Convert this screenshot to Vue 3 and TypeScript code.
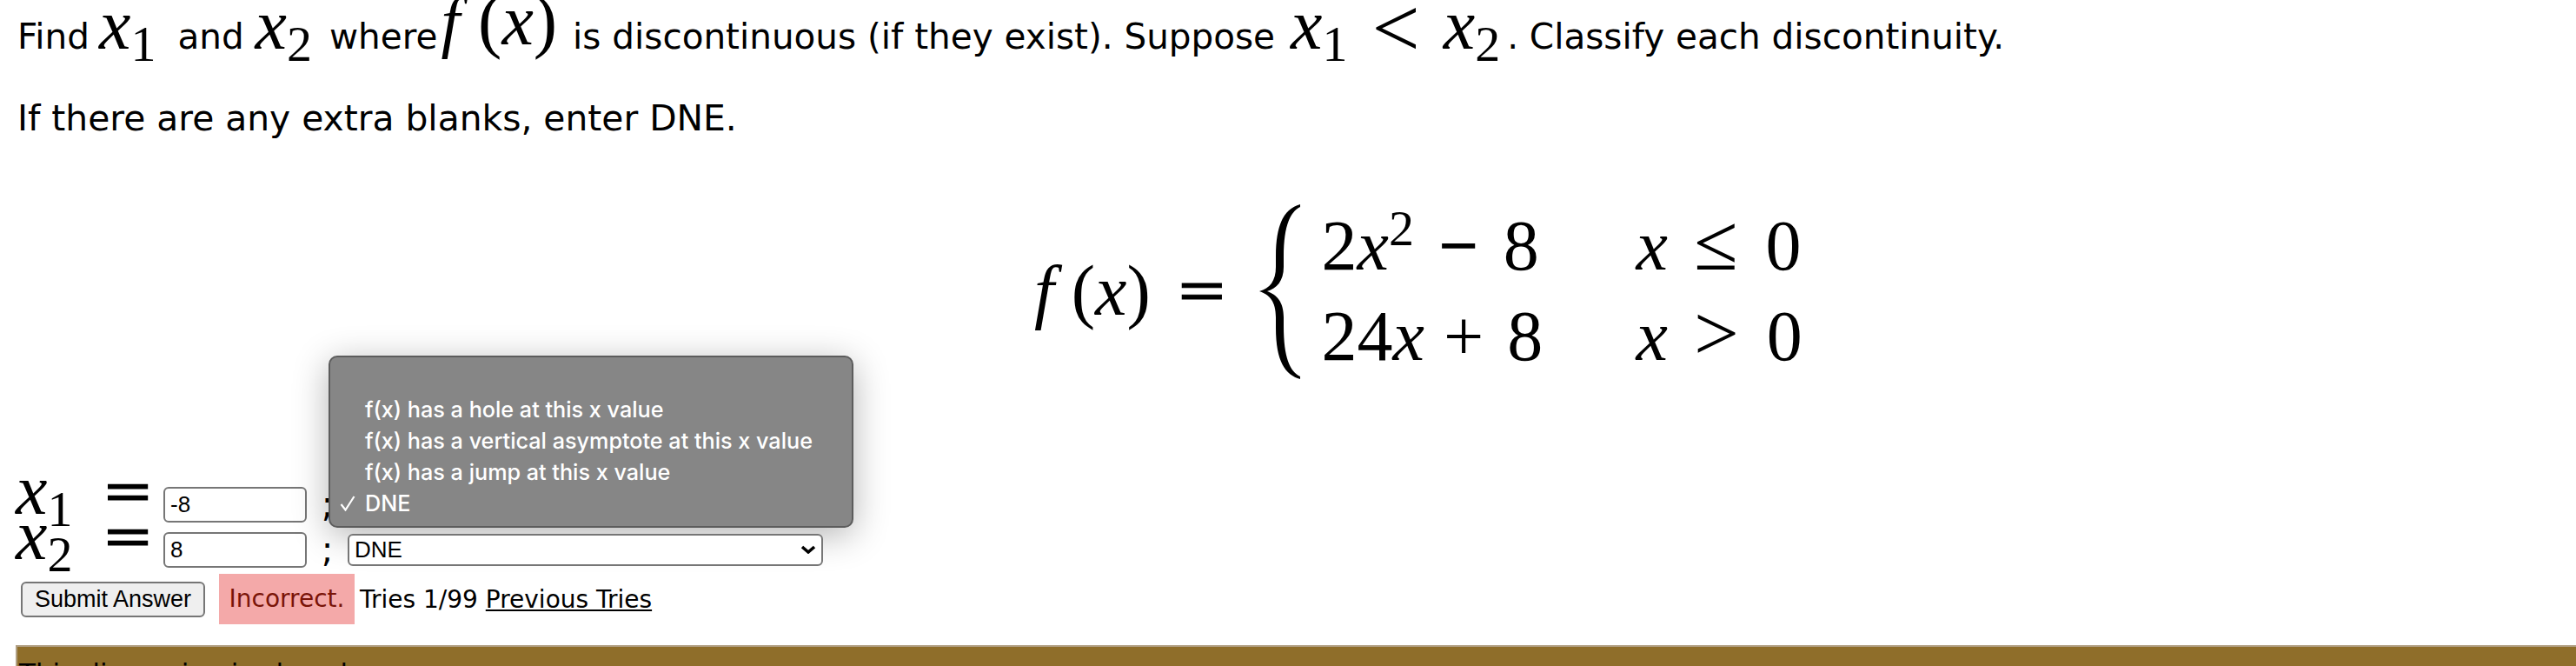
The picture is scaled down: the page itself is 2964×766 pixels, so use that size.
<script setup lang="ts">
const options: string[] = [
  'f(x) has a hole at this x value',
  'f(x) has a vertical asymptote at this x value',
  'f(x) has a jump at this x value',
  'DNE',
]
</script>

<template>
  <main class="page">
    <p class="line first">
      <span>Find</span>
      <span class="m a1"><i>x</i><sub>1</sub></span>
      <span class="t-and">and</span>
      <span class="m a2"><i>x</i><sub>2</sub></span>
      <span class="t-where">where</span>
      <span class="m a3"><i class="f">f</i>(<i>x</i>)</span>
      <span class="t-is">is discontinuous (if they exist). Suppose</span>
      <span class="m a4"><i>x</i><sub>1</sub></span>
      <span class="m lt">&lt;</span>
      <span class="m a5"><i>x</i><sub>2</sub></span>
      <span class="t-classify">. Classify each discontinuity.</span>
    </p>
    <p class="line second">If there are any extra blanks, enter DNE.</p>

    <div class="display">
      <span class="fx"><i class="f2">f</i>(<i>x</i>)</span>
      <span class="eq">=</span>
      <svg class="brace" viewBox="0 0 47 201" width="47" height="201">
        <path d="M47 0 C30 5 19 20 19 60 L19 72 C19 88 12 97 0 100 C12 104 19 112 19 130 L19 142 C19 181 30 196 47 201 L47 198 C35 192 28 176 28 140 L28 130 C28 112 20 104 9 100 C20 97 28 88 28 72 L28 60 C28 26 35 9 47 3 Z" fill="#000" />
      </svg>
      <div class="cases">
        <span class="c1">2<i>x</i><sup>2</sup><span class="op">−</span>8</span>
        <span class="c2"><i>x</i><span class="rel">≤</span>0</span>
        <span class="c1">24<i>x</i><span class="op plus">+</span>8</span>
        <span class="c2"><i>x</i><span class="rel">&gt;</span>0</span>
      </div>
    </div>

    <div class="answers">
      <div class="row">
        <span class="var"><i>x</i><sub>1</sub></span>
        <span class="equals">=</span>
        <input class="field" value="-8" />
        <span class="semi">;</span>
        <div class="picker-wrap">
          <select class="picker"><option>DNE</option></select>
          <svg class="chev" viewBox="0 0 18 10" width="18" height="10"><path d="M2 2 L9 8 L16 2" fill="none" stroke="#000" stroke-width="3.6" /></svg>
          <div class="menu">
            <div v-for="o in options" :key="o" class="item">
              <span class="check">
                <svg v-if="o === 'DNE'" viewBox="0 0 18 18" width="18" height="18"><path d="M1.5 10 L6.5 16.5 L16.5 1" fill="none" stroke="#fff" stroke-width="2.2" /></svg>
              </span>{{ o }}
            </div>
          </div>
        </div>
      </div>
      <div class="row">
        <span class="var"><i>x</i><sub>2</sub></span>
        <span class="equals">=</span>
        <input class="field" value="8" />
        <span class="semi">;</span>
        <div class="picker-wrap">
          <select class="picker"><option>DNE</option></select>
          <svg class="chev" viewBox="0 0 18 10" width="18" height="10"><path d="M2 2 L9 8 L16 2" fill="none" stroke="#000" stroke-width="3.6" /></svg>
        </div>
      </div>
    </div>

    <div class="submit-row">
      <button class="submit">Submit Answer</button>
      <span class="bad">Incorrect.</span>
      <span class="tries">Tries 1/99 <a class="prev">Previous Tries</a></span>
    </div>

    <div class="discussion">This discussion is closed.</div>
  </main>
</template>

<style>
html, body { margin: 0; background: #fff; overflow: hidden; }
</style>

<style scoped>
.page {
  width: 2964px;
  height: 766px;
  overflow: hidden;
  box-sizing: border-box;
  padding: 0 0 0 18px;
  font-family: "DejaVu Sans", sans-serif;
  color: #000;
  background: #fff;
}
.line { margin: 0; white-space: nowrap; font-size: 40.5px; }
.first { height: 84px; line-height: 46px; padding-left: 2px; display: flex; align-items: baseline; margin-top: 0; }
.second { height: 60px; line-height: 60px; padding-left: 2px; margin-top: 22px; font-size: 40.8px; }
.m { font-family: "Liberation Serif", serif; font-size: 82px; line-height: 46px; }
.m sub { font-size: 58px; line-height: 0; vertical-align: -14px; }
.f { margin-right: 21px; font-size: 78px; }
.f2 { margin-right: 20px; }
.a1 { margin-left: 11px; }
.t-and { margin-left: 25px; }
.a2 { margin-left: 13px; }
.t-where { margin-left: 20px; }
.a3 { margin-left: 4px; transform: translateY(-5px); }
.t-is { margin-left: 18px; }
.a4 { margin-left: 18px; }
.lt { margin-left: 28px; font-size: 98px; transform: translateY(9px); }
.a5 { margin-left: 27px; }
.t-classify { margin-left: 8px; }

.display {
  height: 338px;
  display: flex;
  align-items: center;
  padding-left: 1172px;
  font-family: "Liberation Serif", serif;
  font-size: 82px;
}
.fx { margin-right: 32px; }
.eq { margin-right: 38px; font-weight: 700; font-size: 96px; line-height: 100px; transform: scaleY(0.7); -webkit-text-stroke: 1.6px #000; }
.brace { margin-right: 25px; flex: none; }
.cases {
  display: grid;
  grid-template-columns: 362px auto;
  grid-auto-rows: 104px;
  align-items: center;
  white-space: nowrap;
}
.cases sup { font-size: 58px; line-height: 0; vertical-align: 28px; }
.op { margin: 0 28px; font-weight: 700; }
.plus { margin: 0 27px 0 22px; font-weight: 400; }
.rel { margin: 0 32px 0 30px; font-size: 92px; line-height: 0; }

.answers { display: flex; flex-direction: column; height: 106px; margin-top: 50px; }
.row { display: flex; align-items: center; height: 52px; flex: none; }
.var { font-family: "Liberation Serif", serif; font-size: 82px; width: 102px; line-height: 52px; transform: translateY(-16px); }
.var sub { font-size: 58px; line-height: 0; vertical-align: -14px; }
.equals { font-family: "Liberation Serif", serif; font-size: 96px; font-weight: 700; width: 68px; line-height: 52px; transform: translateY(-14px) scaleY(0.68); -webkit-text-stroke: 1.6px #000; }
.field {
  width: 165px;
  height: 41px;
  box-sizing: border-box;
  border: 2px solid #767676;
  border-radius: 6px;
  padding: 0 6px;
  font-family: "Liberation Sans", sans-serif;
  font-size: 26px;
  background: #fff;
  color: #000;
}
.semi { width: 47px; text-align: center; font-size: 40.5px; }
.picker-wrap { position: relative; }
.picker {
  appearance: none;
  width: 547px;
  height: 37px;
  box-sizing: border-box;
  border: 2px solid #767676;
  border-radius: 6px;
  padding: 0 6px;
  font-family: "Liberation Sans", sans-serif;
  font-size: 26px;
  background: #fff;
  color: #000;
  display: block;
}
.chev { position: absolute; right: 8px; top: 13px; pointer-events: none; }
.menu {
  position: absolute;
  left: -22px;
  bottom: -8px;
  width: 604px;
  height: 198px;
  box-sizing: border-box;
  padding: 42px 0 10px;
  border: 2px solid #5c5c5c;
  border-radius: 10px;
  background: #868686;
  box-shadow: 0 8px 40px rgba(0, 0, 0, 0.3);
  color: #fff;
  font-family: "Inter", sans-serif;
  font-size: 25.2px;
  font-weight: 500;
}
.item { height: 36px; line-height: 36px; white-space: nowrap; display: flex; }
.check { width: 40px; flex: none; padding-left: 11px; box-sizing: border-box; display: flex; align-items: center; }

.submit-row { display: flex; align-items: center; height: 58px; padding-left: 6px; }
.submit {
  width: 212px;
  height: 41px;
  box-sizing: border-box;
  border: 2px solid #767676;
  border-radius: 6px;
  background: #efefef;
  color: #000;
  font-family: "Liberation Sans", sans-serif;
  font-size: 27px;
  padding: 0;
}
.bad {
  margin-left: 16px;
  height: 58px;
  line-height: 58px;
  width: 156px;
  text-align: center;
  background: #f4a9a9;
  color: #7a1408;
  font-size: 28px;
}
.tries { margin-left: 6px; font-size: 28px; white-space: nowrap; }
.prev { text-decoration: underline; color: #000; }

.discussion {
  margin-top: 24px;
  height: 60px;
  box-sizing: border-box;
  border: 2px solid #b09f82;
  border-right: none;
  background: #8f6e2a;
  font-size: 31px;
  line-height: 44px;
  padding: 8px 0 0 2px;
}
</style>
